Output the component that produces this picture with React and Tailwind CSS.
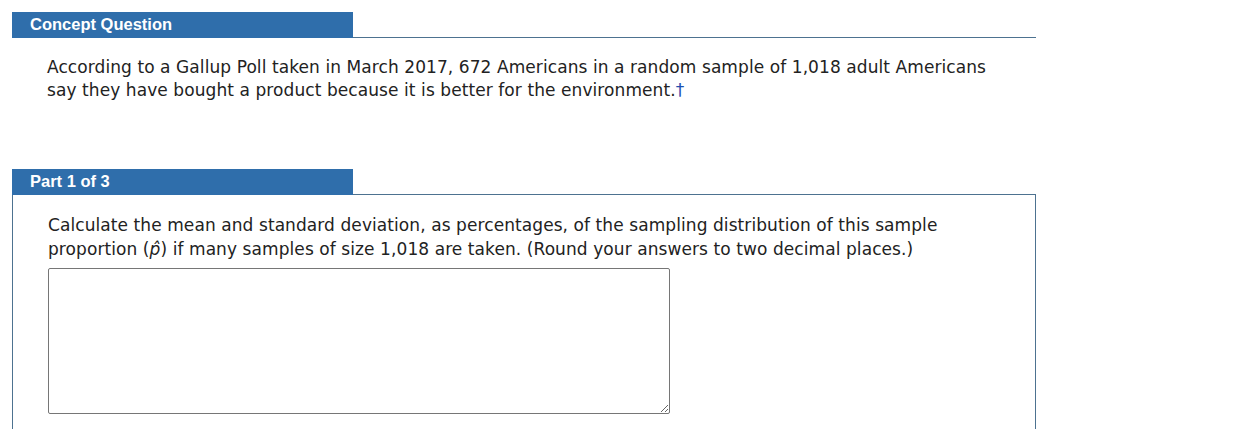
import React from 'react';

const bodyFont = { fontFamily: '"DejaVu Sans", Verdana, sans-serif' };

const SectionHeader = ({ title }) => (
    <div className="flex items-end">
        <div className="w-[341px] h-[26px] bg-[#2f6eab] text-white font-bold text-[16.5px] pl-[18px] leading-[25px] font-['Liberation_Sans',Arial,sans-serif]">
            {title}
        </div>
        <div className="flex-1 border-b border-[#4d7290]"></div>
    </div>
);

const App = () => {
    return (
        <div className="w-[1249px] h-[429px] bg-white overflow-hidden pt-[12px] pl-[12px]">
            <div className="w-[1024px]">
                <SectionHeader title="Concept Question" />
                <div className="pl-[35px] pt-[18px] text-[17px] tracking-[0.08px] leading-[23px] text-[#222]" style={bodyFont}>
                    According to a Gallup Poll taken in March 2017, 672 Americans in a random sample of 1,018 adult Americans
                    <br />
                    say they have bought a product because it is better for the environment.<span className="text-[#1f4fb0]">†</span>
                </div>

                <div className="mt-[67px]">
                    <SectionHeader title="Part 1 of 3" />
                    <div className="border border-t-0 border-[#4d7290] h-[280px] pl-[35px] pt-[18px]">
                        <div className="text-[17px] tracking-[0.08px] leading-[24px] text-[#222]" style={bodyFont}>
                            Calculate the mean and standard deviation, as percentages, of the sampling distribution of this sample
                            <br />
                            proportion (<i>p̂</i>) if many samples of size 1,018 are taken. (Round your answers to two decimal places.)
                        </div>
                        <textarea className="block mt-[7px] w-[622px] h-[146px] border border-[#767676] rounded-[2px] resize-y"></textarea>
                    </div>
                </div>
            </div>
        </div>
    );
};

export default App;
